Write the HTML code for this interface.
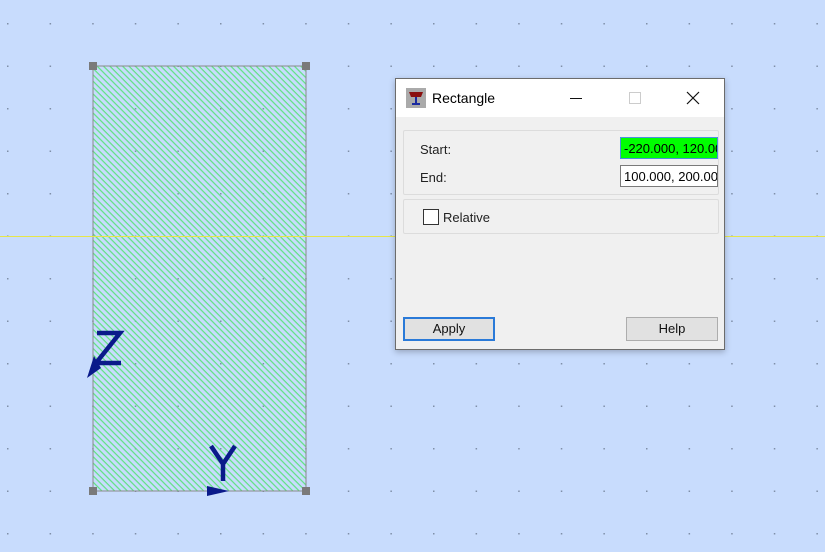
<!DOCTYPE html>
<html><head><meta charset="utf-8"><style>
body{margin:0;width:825px;height:552px;overflow:hidden;background:#c8dcfd;font-family:"Liberation Sans",sans-serif;position:relative}
svg{position:absolute;left:0;top:0}
.dlg{position:absolute;left:395px;top:78px;width:328px;height:270px;border:1px solid #6c6c6c;background:#f0f0f0;box-shadow:0 2px 6px rgba(0,0,0,.25)}
.tb{height:38px;background:#fff;position:relative;font-size:14px}
.grp{position:absolute;border:1px solid #dcdcdc;border-radius:2px}
.lbl{position:absolute;font-size:13px;color:#222}
.in{position:absolute;height:22px;border:1px solid #7a7a7a;background:#fff;font-size:13px;line-height:22px;overflow:hidden;white-space:nowrap;padding-left:3px;box-sizing:border-box}
.btn{position:absolute;height:24px;background:#e1e1e1;border:1px solid #adadad;box-sizing:border-box;font-size:13px;text-align:center;line-height:22px;color:#111}
</style></head><body>
<svg width="825" height="552">
<defs>
<pattern id="dots" x="7" y="23" width="42.6" height="42.5" patternUnits="userSpaceOnUse"><rect width="1.5" height="1.5" fill="#7f8fa8"/></pattern>
<pattern id="h" width="4.5" height="4.5" patternUnits="userSpaceOnUse" patternTransform="rotate(45)"><rect width="4.5" height="1.2" fill="#5fe47f"/></pattern>
</defs>
<rect width="825" height="552" fill="url(#dots)"/>
<rect x="93" y="66" width="213" height="425" fill="url(#h)" stroke="#8a8a8a" stroke-width="1"/>
<line x1="0" y1="236.5" x2="825" y2="236.5" stroke="#e6e64a" stroke-width="1"/>
<rect x="89" y="62" width="8" height="8" fill="#7a7a7a"/><rect x="302" y="62" width="8" height="8" fill="#7a7a7a"/>
<rect x="89" y="487" width="8" height="8" fill="#7a7a7a"/><rect x="302" y="487" width="8" height="8" fill="#7a7a7a"/>
<g fill="none" stroke="#0a1a8a" stroke-width="4.5">
<path d="M97 333H120L96 363H121"/>
<path d="M211 446L223 464L235 446M223 464V481"/>
</g>
<path d="M87 378L94 356L101 368Z" fill="#0a1a8a"/>
<path d="M207 486L229 491L207 496Z" fill="#0a1a8a"/>
</svg>
<div class="dlg">
<div class="tb">
<svg width="20" height="20" style="left:10px;top:9px"><rect width="20" height="20" fill="#aaa"/><path d="M3 4h14l-2 5h-4v6h3v2H6v-2h3V9H5z" fill="#8a1010"/><path d="M9 9h2v6h3v2H6v-2h3z" fill="#1a2aa0"/></svg>
<span style="position:absolute;left:36px;top:11px">Rectangle</span>
<div style="position:absolute;left:174px;top:19px;width:12px;height:1px;background:#111"></div>
<div style="position:absolute;left:233px;top:13px;width:10px;height:10px;border:1px solid #ccc"></div>
<svg width="14" height="14" style="left:290px;top:12px"><path d="M1 1L13 13M13 1L1 13" stroke="#111" stroke-width="1.2"/></svg>
</div>
<div class="grp" style="left:7px;top:51px;width:314px;height:63px"></div>
<div class="lbl" style="left:24px;top:63px">Start:</div>
<div class="lbl" style="left:24px;top:91px">End:</div>
<div class="in" style="left:224px;top:58px;width:98px;background:#00ff00;border-color:#4a90e0">-220.000, 120.000</div>
<div class="in" style="left:224px;top:86px;width:98px">100.000, 200.000</div>
<div class="grp" style="left:7px;top:120px;width:314px;height:33px"></div>
<div style="position:absolute;left:27px;top:130px;width:16px;height:16px;border:1px solid #333;background:#fff;box-sizing:border-box"></div>
<div class="lbl" style="left:47px;top:131px">Relative</div>
<div class="btn" style="left:7px;top:238px;width:92px;border:2px solid #2a7ad8;line-height:20px">Apply</div>
<div class="btn" style="left:230px;top:238px;width:92px">Help</div>
</div>
</body></html>
